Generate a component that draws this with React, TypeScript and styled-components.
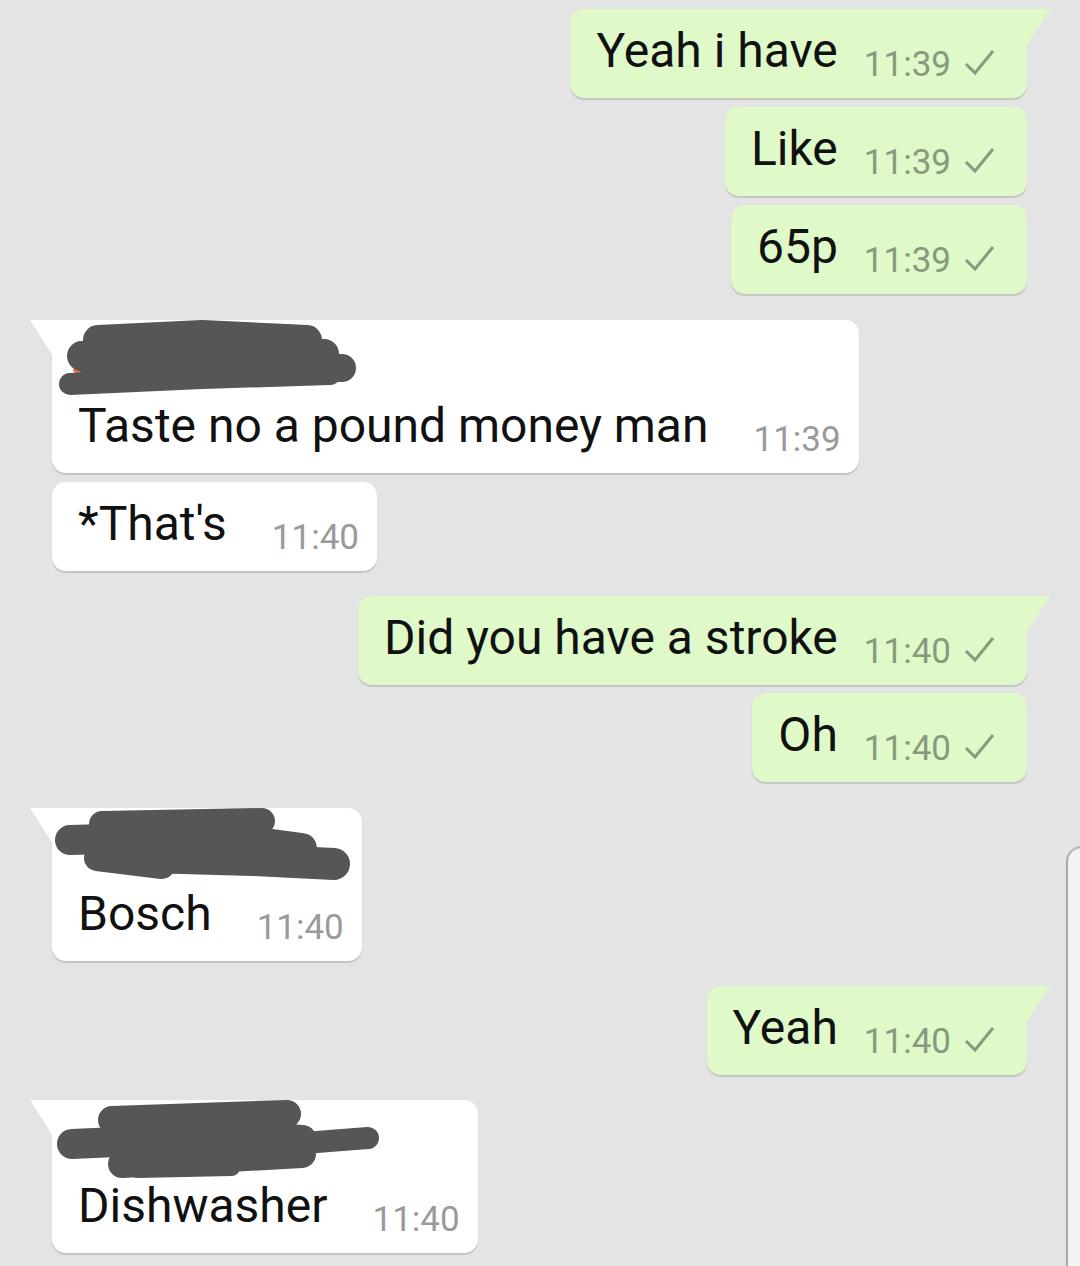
import styled, { createGlobalStyle, css } from "styled-components";

type Stroke = { pts: string; w: number };

type Message = {
  out?: boolean;
  tail?: boolean;
  gap: number;
  text: string;
  time: string;
  sender?: { width: number; strokes: Stroke[]; speck?: [number, number] };
};

const GlobalStyle = createGlobalStyle`
  html, body {
    margin: 0;
    padding: 0;
    background: #e4e4e4;
  }
  body {
    font-family: Roboto, "Noto Sans", "Liberation Sans", sans-serif;
  }
`;

const Chat = styled.div`
  position: relative;
  display: flex;
  flex-direction: column;
  box-sizing: border-box;
  min-height: 1266px;
  padding: 9px 53px 0 52px;
  overflow: hidden;
`;

const Bubble = styled.div<{ $out?: boolean; $tail?: boolean; $gap: number; $sender?: boolean }>`
  position: relative;
  align-self: ${(p) => (p.$out ? "flex-end" : "flex-start")};
  margin-top: ${(p) => p.$gap}px;
  padding: ${(p) => (p.$sender ? 0 : 14)}px ${(p) => (p.$out ? 32 : 18)}px 13px 26px;
  background: ${(p) => (p.$out ? "#dff9c9" : "#ffffff")};
  border-radius: 14px;
  box-shadow: 0 1.5px 1px rgba(0, 0, 0, 0.14);

  ${(p) =>
    p.$tail &&
    css`
      ${p.$out ? "border-top-right-radius: 0;" : "border-top-left-radius: 0;"}
      &::after {
        content: "";
        position: absolute;
        top: 0;
        ${p.$out ? "right: -23px;" : "left: -22px;"}
        width: 23px;
        height: 36px;
        background: ${p.$out ? "#dff9c9" : "#ffffff"};
        clip-path: ${p.$out
          ? "polygon(0 0, 100% 0, 0 100%)"
          : "polygon(0 0, 100% 0, 100% 100%)"};
      }
    `}
`;

// the scribbled-out sender name; it may paint past its box
const SenderMark = styled.svg`
  display: block;
  margin-left: -26px;
  overflow: visible;
`;

const Row = styled.div`
  display: flex;
  align-items: flex-end;
`;

const Text = styled.span`
  margin-bottom: 6px;
  font-size: 48px;
  line-height: 56px;
  color: #111;
  white-space: nowrap;
`;

const Meta = styled.span<{ $out?: boolean }>`
  display: inline-flex;
  align-items: baseline;
  gap: 13px;
  margin-left: ${(p) => (p.$out ? 26 : 45)}px;
  font-size: 35px;
  line-height: 41px;
  color: ${(p) => (p.$out ? "#879a7f" : "#9a9a9a")};
  white-space: nowrap;
`;

const EdgePanel = styled.div`
  position: absolute;
  top: 846px;
  left: 1066px;
  bottom: 0;
  width: 40px;
  background: #f3f3f3;
  border-left: 2px solid #a9a9a9;
  border-top: 2px solid #b9b9b9;
  border-top-left-radius: 16px;
`;

const Tick = () => (
  <svg width="31" height="27" viewBox="0 0 31 27">
    <path d="M2 15 L11 24 L29 2" fill="none" stroke="#879a7f" strokeWidth="3" />
  </svg>
);

const Sender = ({ width, strokes, speck }: NonNullable<Message["sender"]>) => (
  <SenderMark width={width} height={78} viewBox={`0 0 ${width} 78`}>
    {speck && <ellipse cx={speck[0]} cy={speck[1]} rx={7} ry={4} fill="#e0703a" />}
    {strokes.map((s, i) => (
      <polyline
        key={i}
        points={s.pts}
        fill="none"
        stroke="#565656"
        strokeWidth={s.w}
        strokeLinecap="round"
        strokeLinejoin="round"
      />
    ))}
  </SenderMark>
);

const messages: Message[] = [
  { out: true, tail: true, gap: 0, text: "Yeah i have", time: "11:39" },
  { out: true, gap: 9, text: "Like", time: "11:39" },
  { out: true, gap: 9, text: "65p", time: "11:39" },
  {
    tail: true,
    gap: 26,
    text: "Taste no a pound money man",
    time: "11:39",
    sender: {
      width: 300,
      speck: [28, 50],
      strokes: [
        { pts: "46,20 150,15 255,20", w: 30 },
        { pts: "30,36 150,32 272,34", w: 30 },
        { pts: "42,50 170,48 290,48", w: 28 },
        { pts: "18,64 150,58 278,54", w: 22 },
      ],
    },
  },
  { gap: 9, text: "*That's", time: "11:40" },
  { out: true, tail: true, gap: 25, text: "Did you have a stroke", time: "11:40" },
  { out: true, gap: 8, text: "Oh", time: "11:40" },
  {
    tail: true,
    gap: 26,
    text: "Bosch",
    time: "11:40",
    sender: {
      width: 240,
      strokes: [
        { pts: "50,16 210,13", w: 26 },
        { pts: "18,32 160,28 250,40", w: 30 },
        { pts: "60,48 200,52 282,56", w: 32 },
        { pts: "45,50 110,58", w: 26 },
      ],
    },
  },
  { out: true, tail: true, gap: 25, text: "Yeah", time: "11:40" },
  {
    tail: true,
    gap: 25,
    text: "Dishwasher",
    time: "11:40",
    sender: {
      width: 320,
      speck: [16, 52],
      strokes: [
        { pts: "60,20 235,14", w: 28 },
        { pts: "20,44 200,36 250,40", w: 30 },
        { pts: "70,64 250,54", w: 28 },
        { pts: "240,44 290,40 316,38", w: 22 },
        { pts: "85,70 180,68", w: 16 },
      ],
    },
  },
];

export default function App() {
  return (
    <>
      <GlobalStyle />
      <Chat>
        {messages.map((m, i) => (
          <Bubble key={i} $out={m.out} $tail={m.tail} $gap={m.gap} $sender={!!m.sender}>
            {m.sender && <Sender {...m.sender} />}
            <Row>
              <Text>{m.text}</Text>
              <Meta $out={m.out}>
                {m.time}
                {m.out && <Tick />}
              </Meta>
            </Row>
          </Bubble>
        ))}
        <EdgePanel />
      </Chat>
    </>
  );
}
